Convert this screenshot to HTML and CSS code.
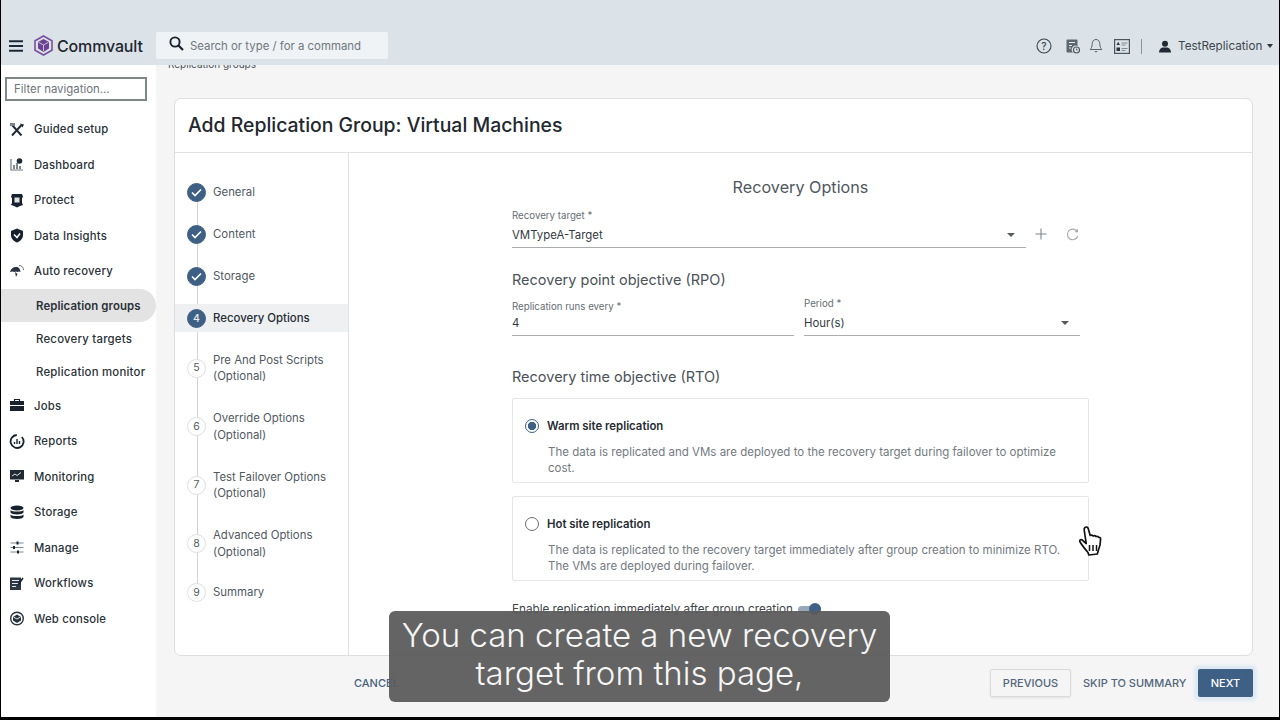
FILE: index.html
```html
<!DOCTYPE html>
<html lang="en">
<head>
<meta charset="utf-8">
<title>Add Replication Group</title>
<link rel="stylesheet" href="styles.css">
</head>
<body>
<div class="app">
  <header class="topbar">
    <svg class="burger" width="14" height="12" viewBox="0 0 14 12"><path d="M0 1.200h14M0 6h14M0 10.800h14" stroke="#1c2b3a" stroke-width="2"/></svg>
    <svg class="logo" width="19" height="21" viewBox="0 0 19 21"><path d="M9.500 1 18 5.700v9.600L9.500 20 1 15.300V5.700z" fill="none" stroke="#7b4fa0" stroke-width="1.600"/><path d="M9.500 4 15 7v6.600L9.500 17 4 13.600V7z" fill="#6c4391"/><path d="M4.500 7.200 9.500 10l5-2.800M9.500 10v6" stroke="#d9cbe4" stroke-width=".9" fill="none"/></svg>
    <span class="brand">Commvault</span>
    <div class="search">
      <svg width="15" height="15" viewBox="0 0 15 15"><circle cx="6" cy="6" r="4.600" fill="none" stroke="#17222e" stroke-width="1.900"/><path d="m9.500 9.500 4.500 4.500" stroke="#17222e" stroke-width="2.200"/></svg>
      <span>Search or type / for a command</span>
    </div>
    <div class="tools">
      <svg class="t-help" width="16" height="16" viewBox="0 0 16 16"><circle cx="8" cy="8" r="7" fill="none" stroke="#3b4650" stroke-width="1.100"/><text x="8" y="11.500" text-anchor="middle" class="qm">?</text></svg>
      <svg class="t-cal" width="14" height="16" viewBox="0 0 14 16"><path d="M1.500 1.500h9a1 1 0 0 1 1 1V8a4 4 0 0 0-4.500 6.500h-5.500a1 1 0 0 1-1-1v-11a1 1 0 0 1 1-1z" fill="#5c6770"/><path d="M3 4.500h6M3 7.500h3M3 10h2" stroke="#e3e8ec" stroke-width="1.100"/><circle cx="10.500" cy="12" r="3" fill="none" stroke="#4a555f" stroke-width="1.100"/><path d="M10.500 10.500V12h1.300" stroke="#4a555f" fill="none" stroke-width=".8"/></svg>
      <svg class="t-bell" width="14" height="16" viewBox="0 0 14 16"><path d="M7 1.500c-2.500 0-3.800 2-3.800 4.300 0 3.200-1.200 4.700-2 5.700h11.600c-.8-1-2-2.500-2-5.700C10.800 3.500 9.500 1.500 7 1.500z" fill="none" stroke="#59646e" stroke-width="1"/><path d="M5.500 13.200a1.600 1.600 0 0 0 3 0" fill="#3b4650"/></svg>
      <svg class="t-list" width="16" height="15" viewBox="0 0 16 15"><rect x=".6" y=".6" width="14.800" height="13.800" fill="none" stroke="#4a555f" stroke-width="1.200"/><rect x="2.500" y="8.500" width="3.500" height="3.500" fill="#2b3540"/><path d="M4.200 2.800 6 6H2.500z" fill="#2b3540"/><path d="M7.500 4h6M7.500 6h4M7.500 9.500h6M7.500 11.500h4" stroke="#7f8a93"/></svg>
      <i class="divider"></i>
      <svg class="t-user" width="12" height="13" viewBox="0 0 12 13"><circle cx="6" cy="3.700" r="3" fill="#1f2a35"/><path d="M0 12.500c0-3 2-4.500 3.500-5h5c1.500.5 3.500 2 3.500 5z" fill="#1f2a35"/></svg>
      <span class="user">TestReplication</span>
      <i class="caret dark"></i>
    </div>
  </header>

  <div class="body">
    <nav class="sidebar">
      <div class="filter">Filter navigation...</div>
      <ul class="nav">
        <li class="item"><svg width="16" height="15" viewBox="0 0 16 15"><path d="m3 3 9.500 10.500M12.500 3 3 13.500" stroke="#1f2a35" stroke-width="1.900"/><path d="M1 1h5v3H1z" fill="#7b848c"/><path d="m11 1.500 4 1-1.500 3z" fill="#1f2a35"/></svg>Guided setup</li>
        <li class="item"><svg width="16" height="15" viewBox="0 0 16 15"><path d="M2 2v11h12" fill="none" stroke="#6d7780" stroke-width="1.200"/><path d="M4 12V8h2v4zM7 12V6h2v6zM10 12V9h2v3z" fill="#7f8992"/><circle cx="10.500" cy="4" r="2.800" fill="#1f2a35"/></svg>Dashboard</li>
        <li class="item"><svg width="16" height="15" viewBox="0 0 16 15"><path d="M3 1h10l1 3-1 1v5l1 2-3 1-3 1.500L5 13l-3-1 1-2V5L2 4z" fill="#17222e"/><rect x="5.500" y="4.500" width="5" height="5" fill="#dfe3e6"/></svg>Protect</li>
        <li class="item"><svg width="16" height="15" viewBox="0 0 16 15"><path d="M8 .5 14 3v4c0 3.500-2.500 6-6 7.500C4.500 13 2 10.500 2 7V3z" fill="#17222e"/><path d="m5 6.500 3 3 3-4" stroke="#fff" stroke-width="1.500" fill="none"/></svg>Data Insights</li>
        <li class="item"><svg width="16" height="15" viewBox="0 0 16 15"><path d="M1 8c.500-3 3-5 6-5s4 1.500 4.500 5c-1-.8-2-.8-3 0-1-.8-2-.8-3 0-1.500-.8-3-.8-4.500 0z" fill="#28333e"/><path d="m6 8 1 5 1.500-3" fill="#28333e"/><path d="M10 1.500c3 0 4.500 2 4.500 4.500" fill="none" stroke="#6d7780"/></svg>Auto recovery</li>
        <li class="sub active">Replication groups</li>
        <li class="sub">Recovery targets</li>
        <li class="sub">Replication monitor</li>
        <li class="item"><svg width="16" height="15" viewBox="0 0 16 15"><path d="M5.500 3V1.500h5V3" fill="none" stroke="#17222e" stroke-width="1.200"/><path d="M1 3h14v4H1zM1 8h14v5H1z" fill="#17222e"/></svg>Jobs</li>
        <li class="item"><svg width="16" height="15" viewBox="0 0 16 15"><path d="M12.800 3a6.500 6.500 0 1 1-5-2" fill="none" stroke="#17222e" stroke-width="1.800"/><path d="M5.500 10V8M8 10V5M10.500 10V7" stroke="#17222e" stroke-width="1.400"/></svg>Reports</li>
        <li class="item"><svg width="16" height="15" viewBox="0 0 16 15"><rect x="1" y="1" width="14" height="9.500" fill="#1f2a35"/><path d="m3 7 3-2 2 1.500L12 3.500" stroke="#dfe3e6" fill="none"/><path d="M6 11h4v2H6z" fill="#1f2a35"/></svg>Monitoring</li>
        <li class="item"><svg width="16" height="15" viewBox="0 0 16 15"><ellipse cx="8" cy="3" rx="6.500" ry="2.500" fill="#17222e"/><path d="M1.500 5c1 2 12 2 13 0v2.500c-1 2.500-12 2.500-13 0zM1.500 9.500c1 2 12 2 13 0V12c-1 2.500-12 2.500-13 0z" fill="#17222e"/></svg>Storage</li>
        <li class="item"><svg width="16" height="15" viewBox="0 0 16 15"><path d="M1.500 3h13M1.500 7.500h13M1.500 12h13" stroke="#7f8992"/><path d="M8.500 1.500v3M5 6v3M9 10.500v3" stroke="#17222e" stroke-width="2"/></svg>Manage</li>
        <li class="item"><svg width="16" height="15" viewBox="0 0 16 15"><rect x="1" y="1.500" width="11" height="12.500" fill="#2d3842"/><path d="M3 4.500h7M3 7.500h7M3 10.500h4" stroke="#e6e9eb"/><path d="m9 9 5-7" stroke="#17222e" stroke-width="1.500"/></svg>Workflows</li>
        <li class="item"><svg width="16" height="15" viewBox="0 0 16 15"><circle cx="8" cy="7.500" r="6.300" fill="none" stroke="#28333e" stroke-width="1.400"/><path d="M8 3.500 12 6v3.500L8 12 4 9.500V6z" fill="#28333e"/><path d="M4.500 6 8 8l3.500-2" stroke="#e6e9eb" fill="none"/></svg>Web console</li>
      </ul>
    </nav>

    <main class="main">
      <div class="crumb">Replication groups</div>
      <section class="card">
        <h1>Add Replication Group: Virtual Machines</h1>
        <div class="wizard">
          <ol class="steps">
            <li class="step"><div class="step-in"><span class="dot done"><svg width="11" height="9" viewBox="0 0 11 9"><path d="m1 4.500 3 3 6-6" fill="none" stroke="#fff" stroke-width="1.600"/></svg></span>General</div></li>
            <li class="step"><div class="step-in"><span class="dot done"><svg width="11" height="9" viewBox="0 0 11 9"><path d="m1 4.500 3 3 6-6" fill="none" stroke="#fff" stroke-width="1.600"/></svg></span>Content</div></li>
            <li class="step"><div class="step-in"><span class="dot done"><svg width="11" height="9" viewBox="0 0 11 9"><path d="m1 4.500 3 3 6-6" fill="none" stroke="#fff" stroke-width="1.600"/></svg></span>Storage</div></li>
            <li class="step current"><div class="step-in"><span class="dot done">4</span>Recovery Options</div></li>
            <li class="step two"><div class="step-in"><span class="dot">5</span><span>Pre And Post Scripts<br>(Optional)</span></div></li>
            <li class="step two"><div class="step-in"><span class="dot">6</span><span>Override Options<br>(Optional)</span></div></li>
            <li class="step two"><div class="step-in"><span class="dot">7</span><span>Test Failover Options<br>(Optional)</span></div></li>
            <li class="step two"><div class="step-in"><span class="dot">8</span><span>Advanced Options<br>(Optional)</span></div></li>
            <li class="step last"><div class="step-in"><span class="dot">9</span>Summary</div></li>
          </ol>
          <div class="content">
            <div class="form">
              <h2>Recovery Options</h2>
              <div class="target-row">
                <div class="field wide">
                  <label>Recovery target *</label>
                  <div class="value">VMTypeA-Target<i class="caret"></i></div>
                </div>
                <svg class="plus" width="12" height="12" viewBox="0 0 12 12"><path d="M6 .5v11M.5 6h11" stroke="#7d868d" stroke-width="1.100"/></svg>
                <svg class="refresh" width="13" height="13" viewBox="0 0 13 13"><path d="M11.200 3.500A5.300 5.300 0 1 0 11.800 8" fill="none" stroke="#a3a9ae" stroke-width="1.100"/><path d="M12 .8v3.500H8.500z" fill="#a3a9ae"/></svg>
              </div>
              <h3 class="rpo">Recovery point objective (RPO)</h3>
              <div class="rpo-row">
                <div class="field runs">
                  <label>Replication runs every *</label>
                  <div class="value">4</div>
                </div>
                <div class="field period">
                  <label>Period *</label>
                  <div class="value">Hour(s)<i class="caret"></i></div>
                </div>
              </div>
              <h3 class="rto">Recovery time objective (RTO)</h3>
              <div class="option">
                <div class="opt-title"><span class="radio on"></span>Warm site replication</div>
                <p>The data is replicated and VMs are deployed to the recovery target during failover to optimize cost.</p>
              </div>
              <div class="option">
                <div class="opt-title"><span class="radio"></span>Hot site replication</div>
                <p>The data is replicated to the recovery target immediately after group creation to minimize RTO. The VMs are deployed during failover.</p>
              </div>
              <div class="toggle-row">Enable replication immediately after group creation<span class="toggle"></span></div>
            </div>
          </div>
        </div>
      </section>
      <footer class="actions">
        <span class="cancel">CANCEL</span>
        <span class="btn prev">PREVIOUS</span>
        <span class="skip">SKIP TO SUMMARY</span>
        <span class="btn next">NEXT</span>
      </footer>
    </main>
  </div>

  <svg class="cursor" width="28" height="32" viewBox="0 0 28 32"><path d="M7 2.500c1.300-1 2.800-.3 3.200 1l2 7c1-.8 2.300-.5 3 .5.900-.7 2.200-.4 2.800.6 1-.5 2.200-.2 2.800.8.900-.3 1.800.4 1.800 1.600 0 4-.8 8-2.300 11.500l-1 3.500-8.500 1-.8-2.500C7 24 4 20.500 1.800 16.500c-.5-1.200.9-2.500 2.200-1.700l4.200 3.700L6.200 5c-.2-1 .1-2 .8-2.500z" fill="#fff" stroke="#111" stroke-width="1.700" stroke-linejoin="round"/><path d="M11.500 20v6M15 20v6M18.500 20v6" stroke="#111" stroke-width="1.500"/></svg>
  <div class="caption">You can create a new recovery<br>target from this page,</div>
</div>
</body>
</html>
```
FILE: styles.css
```css
* { box-sizing: border-box; }
html, body { margin: 0; height: 720px; overflow: hidden; }
body { background: #000; font-family: Inter, "Liberation Sans", sans-serif; color: #2b3036; }
svg { flex: none; display: block; }
i { display: block; }

.app { position: relative; margin-left: 1px; width: 1278px; height: 717px; display: flex; flex-direction: column; overflow: hidden; background: #f5f5f6; }

.topbar { height: 65px; flex: none; background: #dce3e8; display: flex; align-items: center; padding: 32px 0 6px 8px; position: relative; z-index: 2; }
.logo { margin-left: 11px; }
.brand { margin-left: 4px; width: 99px; font-size: 16px; font-weight: 500; letter-spacing: -.15px; color: #1d2730; }
.search { width: 232px; height: 27px; background: #eff3f5; border-radius: 2px; display: flex; align-items: center; gap: 6px; padding: 0 0 0 13px; font-size: 11.400px; color: #6f777e; }
.search svg { margin-top: -4px; }
.tools { margin-left: auto; margin-top: 1px; display: flex; align-items: center; padding-right: 6px; }
.qm { font: 500 10px Inter, sans-serif; fill: #3b4650; }
.t-help { margin-right: 14px; }
.t-cal { margin-right: 9px; }
.t-bell { margin-right: 11px; }
.t-list { margin-right: 11px; }
.divider { width: 1px; height: 15px; background: #8b959d; margin-right: 17px; }
.t-user { margin-right: 7px; }
.user { font-size: 11.700px; color: #3c464f; width: 89px; }
.caret { width: 0; height: 0; border-left: 4px solid transparent; border-right: 4px solid transparent; border-top: 4px solid #555b60; }
.caret.dark { border-top-color: #2b3540; border-left-width: 3.500px; border-right-width: 3.500px; }

.body { flex: 1; display: flex; min-height: 0; }

.sidebar { width: 155px; flex: none; background: #fff; padding: 12px 0 0; }
.filter { margin-left: 4px; width: 142px; height: 24px; border: 2px solid #7f8888; display: flex; align-items: center; padding-left: 7px; font-size: 11.400px; color: #6e747a; }
.nav { list-style: none; margin: 10.500px 0 0; padding: 0; }
.item { height: 35.500px; display: flex; align-items: center; gap: 9px; padding-left: 8px; font-size: 11.300px; font-weight: 500; letter-spacing: .2px; color: #2a3138; }
.sub { height: 33px; display: flex; align-items: center; padding: 1px 0 0 35px; font-size: 11.400px; font-weight: 500; letter-spacing: .22px; color: #2a3138; }
.sub.active { background: #e3e3e3; font-weight: 600; letter-spacing: .1px; border-radius: 0 17px 17px 0; }

.main { flex: 1; min-width: 0; display: flex; flex-direction: column; padding: 0 26px 0 18px; overflow: hidden; }
.crumb { margin: -7px 0 0 -6px; height: 40px; font-size: 10px; color: #4a525a; }

.card { height: 558px; flex: none; background: #fff; border: 1px solid #dcdedf; border-radius: 7px; display: flex; flex-direction: column; overflow: hidden; }
h1 { margin: 0; height: 54px; flex: none; display: flex; align-items: center; padding: 0 0 2px 13px; border-bottom: 1px solid #dfe1e2; font-size: 19.400px; font-weight: 500; color: #22282e; }
.wizard { flex: 1; display: flex; min-height: 0; }

.steps { position: relative; width: 174px; flex: none; list-style: none; margin: 0; padding: 18px 0 0; border-right: 1px solid #dfe1e2; font-size: 11.400px; color: #51585f; }
.steps::before { content: ""; position: absolute; left: 21.500px; top: 39px; height: 400px; width: 1px; background: #cfd3d6; }
.step { padding: 7px 0; }
.step.two { padding: 12.750px 0; line-height: 16.500px; }
.step.last { margin-top: -2px; }
.step-in { min-height: 28px; display: flex; align-items: center; gap: 7px; padding-left: 12px; position: relative; }
.current .step-in { background: #eef0f2; color: #262c32; font-weight: 500; }
.dot { width: 19px; height: 19px; flex: none; border-radius: 50%; background: #fff; border: 1px solid #dddfe1; display: flex; align-items: center; justify-content: center; font-size: 10.500px; color: #555c62; }
.dot.done { background: #3f6085; border-color: #3f6085; color: #e8edf2; }

.content { flex: 1; min-width: 0; overflow: hidden; }
.form { width: 577px; margin-left: 163px; }
h2 { margin: 0; height: 44px; padding-top: 24px; text-align: center; font-size: 16.200px; font-weight: 400; line-height: 20px; color: #50575d; }
h3 { margin: 0; font-size: 14.500px; font-weight: 400; line-height: 18px; color: #4b5258; }
label { display: block; margin: 1px 0 -1px; font-size: 9.700px; line-height: 12px; color: #666d73; }
.field { display: flex; flex-direction: column; }
.value { display: flex; align-items: center; justify-content: space-between; font-size: 11.400px; color: #333a40; border-bottom: 1px solid #a9adb0; }

.target-row { display: flex; align-items: flex-start; margin-top: 12px; }
.wide { width: 514px; }
.wide .value { height: 27px; padding: 4px 11px 2px 0; }
.plus { margin: 19px 0 0 9px; }
.refresh { margin: 19px 0 0 19px; }
.rpo { margin-top: 23px; }
.rpo-row { display: flex; align-items: flex-start; margin-top: 8px; gap: 10px; }
.runs { width: 282px; margin-top: 3px; }
.runs .value { height: 24px; padding-bottom: 1px; }
.period { width: 276px; }
.period .value { height: 27px; padding: 2px 11px 0 0; }
.rto { margin-top: 32px; }

.option { height: 85px; margin-top: 13px; border: 1px solid #e5e6e7; border-radius: 2px; padding: 19px 20px 0 12px; }
.rto + .option { margin-top: 12px; }
.opt-title { display: flex; align-items: center; gap: 8px; height: 16px; font-size: 11.400px; font-weight: 600; color: #262c32; }
.radio { width: 14px; height: 14px; border-radius: 50%; border: 1.500px solid #666c71; background: #fff; flex: none; }
.radio.on { border-color: #3f6085; background: radial-gradient(circle, #3f6085 0 3.800px, #fff 4.500px); }
.option p { margin: 10px 0 0 23px; font-size: 11.500px; line-height: 16px; color: #73797f; }
.toggle-row { margin-top: 21px; display: flex; align-items: center; gap: 5px; font-size: 11.700px; color: #3f464c; height: 14px; white-space: nowrap; }
.toggle { width: 23px; height: 7px; background: #98a8bb; border-radius: 4px; position: relative; }
.toggle::after { content: ""; position: absolute; right: 0; top: -3px; width: 12px; height: 12px; border-radius: 50%; background: #3f6085; }

.actions { flex: 1; display: flex; align-items: flex-start; padding-top: 13px; font-size: 11px; font-weight: 500; color: #53657a; }
.cancel { margin: 7px 0 0 180px; color: #46627a; }
.btn { height: 28px; display: flex; align-items: center; justify-content: center; border-radius: 2px; padding-bottom: 1px; }
.prev { margin-left: auto; width: 81px; border: 1px solid #d8dadb; box-shadow: 0 1px 2px #e2e3e4; }
.skip { margin: 7px 12px 0 12px; width: 103px; white-space: nowrap; }
.next { width: 55px; background: #3f6085; color: #fff; box-shadow: 0 0 3px 4px #dfe9f3; }

.cursor { position: absolute; left: 1077px; top: 525px; z-index: 3; }
.caption { position: absolute; left: 388px; top: 611px; width: 501px; height: 91px; z-index: 4; background: rgba(90, 90, 90, .94); border-radius: 6px; color: #f6f6f6; font-size: 33px; font-weight: 300; line-height: 38px; text-align: center; padding-top: 5px; }
```
